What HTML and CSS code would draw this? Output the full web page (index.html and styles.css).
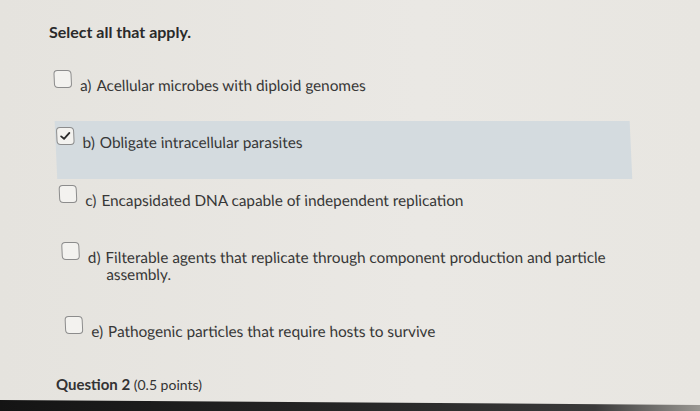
FILE: index.html
```html
<!DOCTYPE html>
<html lang="en">
<head>
    <meta charset="UTF-8">
    <meta name="viewport" content="width=device-width, initial-scale=1.0">
    <title>Quiz - Question 1</title>
    <link rel="stylesheet" href="styles.css">
</head>
<body>

<div class="quiz">
    <h2 class="prompt">Select all that apply.</h2>

    <div class="options">
        <label class="option">
            <span class="box"></span>
            <span class="letter">a)</span>
            <span class="text">Acellular microbes with diploid genomes</span>
        </label>

        <label class="option selected">
            <span class="box checked">
                <svg viewBox="0 0 20 20" width="14" height="14"><polyline points="4,10.5 8,14 16,5.5" fill="none" stroke="#2b2b2b" stroke-width="2.6" stroke-linecap="round" stroke-linejoin="round"/></svg>
            </span>
            <span class="letter">b)</span>
            <span class="text">Obligate intracellular parasites</span>
        </label>

        <label class="option">
            <span class="box"></span>
            <span class="letter">c)</span>
            <span class="text">Encapsidated DNA capable of independent replication</span>
        </label>

        <label class="option">
            <span class="box"></span>
            <span class="letter">d)</span>
            <span class="text">Filterable agents that replicate through component production and particle assembly.</span>
        </label>

        <label class="option">
            <span class="box"></span>
            <span class="letter">e)</span>
            <span class="text">Pathogenic particles that require hosts to survive</span>
        </label>
    </div>

    <div class="next-question"><b>Question 2</b> (0.5 points)</div>
</div>

<div class="screen-edge"></div>

</body>
</html>
```

FILE: styles.css
```css
body {
    font-family: Lato, "Open Sans", sans-serif;
    margin: 0;
    padding: 0;
    height: 411px;
    overflow: hidden;
    display: flex;
    flex-direction: column;
    background: linear-gradient(90deg, #e5e3de 0%, #eae8e4 60%, #e8e6e1 100%);
    color: #333;
}
.quiz {
    padding: 22px 0 0 49px;
}
.prompt {
    margin: 0;
    font-size: 16px;
    line-height: 20px;
    font-weight: 700;
    color: #2a2a2a;
}
.options {
    margin: 22px 0 0 4px;
    width: 575px;
    transform: skewX(2.6deg);
    transform-origin: 0 21px;
}
.option {
    display: flex;
    align-items: flex-start;
    padding: 13px 8px 27px 1px;
    font-size: 15.3px;
    line-height: 17px;
    color: #373737;
}
.option.selected {
    background-color: #d4dbdf;
    padding-bottom: 28px;
}
.box {
    flex-shrink: 0;
    width: 16px;
    height: 16px;
    margin-top: -7px;
    margin-right: 8px;
    border: 1.5px solid #8c8c8c;
    border-radius: 4px;
    background-color: #f3f2ef;
    display: flex;
    align-items: center;
    justify-content: center;
}
.letter {
    flex-shrink: 0;
    margin-right: 5px;
}
.next-question {
    margin: 8px 0 0 7px;
    font-size: 14px;
    line-height: 18px;
    color: #333;
}
.next-question b {
    font-weight: 700;
    font-size: 15px;
}
.screen-edge {
    margin-top: auto;
    height: 11px;
    background: linear-gradient(90deg, #141414 0%, #262626 50%, #3a3a3a 85%, #9a9893 100%);
    clip-path: polygon(0 0, 100% 45%, 100% 100%, 0 100%);
}
```
